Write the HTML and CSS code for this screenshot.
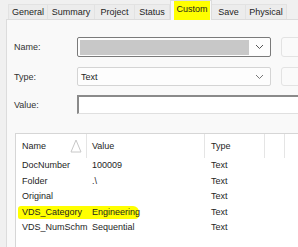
FILE: index.html
```html
<!DOCTYPE html>
<html lang="en">
<head>
    <meta charset="UTF-8">
    <title>Properties</title>
    <link rel="stylesheet" href="styles.css">
</head>
<body>

<!-- Tabs -->
<div class="tabs">
    <div class="tab t-general">General</div>
    <div class="tab t-summary">Summary</div>
    <div class="tab t-project">Project</div>
    <div class="tab t-status">Status</div>
    <div class="tab active t-custom"><span class="mark">Custom</span></div>
    <div class="tab t-save">Save</div>
    <div class="tab t-physical">Physical</div>
</div>

<!-- Custom page -->
<div class="panel">
    <div class="field-row">
        <label class="label">Name:</label>
        <div class="combo focused">
            <span class="redacted"></span>
            <svg class="chev" width="9" height="6" viewBox="0 0 9 6"><path d="M1 1 L4.5 4.5 L8 1" fill="none" stroke="#555" stroke-width="1"/></svg>
        </div>
        <div class="side-btn"></div>
    </div>
    <div class="field-row">
        <label class="label">Type:</label>
        <div class="combo short">
            <span class="combo-text">Text</span>
            <svg class="chev" width="9" height="6" viewBox="0 0 9 6"><path d="M1 1 L4.5 4.5 L8 1" fill="none" stroke="#777" stroke-width="1"/></svg>
        </div>
        <div class="side-btn short"></div>
    </div>
    <div class="field-row">
        <label class="label">Value:</label>
        <div class="value-box"></div>
    </div>

    <div class="list">
        <div class="list-head">
            <div class="col c-name">Name
                <svg class="sort" width="12" height="14" viewBox="0 0 12 14"><path d="M6 1 L11 13 L1 13 Z" fill="none" stroke="#c8c8c8" stroke-width="1"/></svg>
            </div>
            <div class="col c-value">Value</div>
            <div class="col c-type">Type</div>
            <div class="col c-x"></div>
            <div class="col c-y"></div>
        </div>
        <div class="list-row"><span class="c-name">DocNumber</span><span class="c-value">100009</span><span class="c-type">Text</span></div>
        <div class="list-row"><span class="c-name">Folder</span><span class="c-value">.\</span><span class="c-type">Text</span></div>
        <div class="list-row"><span class="c-name">Original</span><span class="c-value"></span><span class="c-type">Text</span></div>
        <div class="list-row marked"><span class="c-name">VDS_Category</span><span class="c-value">Engineering</span><span class="c-type">Text</span></div>
        <div class="list-row"><span class="c-name">VDS_NumSchm</span><span class="c-value">Sequential</span><span class="c-type">Text</span></div>
    </div>
</div>

</body>
</html>
```

FILE: styles.css
```css
body {
    margin: 0;
    width: 298px;
    height: 247px;
    overflow: hidden;
    background-color: #f0f0f0;
    font-family: "Liberation Sans", Arial, sans-serif;
    font-size: 9px;
    color: #1e1e1e;
}

/* tab strip */
.tabs {
    display: flex;
    align-items: flex-end;
    height: 19px;
    padding-left: 8px;
}
.tab {
    flex-shrink: 0;
    height: 15px;
    line-height: 14px;
    text-align: center;
    background-color: #ececec;
    border: 1px solid #e2e2e2;
    border-bottom: none;
    box-sizing: border-box;
}
.tab + .tab {
    border-left: none;
}
.t-general { width: 40px; }
.t-summary { width: 47px; }
.t-project { width: 40px; }
.t-status { width: 35px; }
.t-custom { width: 42px; }
.t-save { width: 34px; }
.t-physical { width: 41px; }

.tab.active {
    height: 20px;
    margin-bottom: -1px;
    padding: 0 1px 0 3px;
    background-color: #f9f9f9;
    border: 1px solid #dcdcdc;
    border-bottom: none;
    position: relative;
    z-index: 1;
}
.mark {
    display: block;
    height: 19px;
    line-height: 17px;
    background-color: #ffff00;
}

/* page */
.panel {
    margin-left: 6px;
    height: 228px;
    padding: 17px 0 0 7px;
    box-sizing: border-box;
    background-color: #f9f9f9;
    border-top: 1px solid #dcdcdc;
    border-left: 1px solid #dcdcdc;
}
.field-row {
    display: flex;
    align-items: center;
    margin-bottom: 10px;
}
.field-row:nth-child(2) {
    margin-bottom: 9px;
}
.label {
    flex-shrink: 0;
    width: 63px;
    color: #333;
}
.combo {
    flex-shrink: 0;
    width: 194px;
    height: 20px;
    box-sizing: border-box;
    display: flex;
    align-items: center;
    padding: 0 6px 0 2px;
    background-color: #fdfdfd;
    border: 1px solid #d4d4d4;
    border-radius: 2px;
}
.combo.focused {
    border-color: #7a7a7a;
}
.combo.short {
    height: 19px;
}
.redacted {
    flex: 1;
    height: 15px;
    margin-right: 6px;
    background-color: #c8c8c8;
}
.combo-text {
    flex: 1;
    padding-left: 1px;
}
.side-btn {
    flex-shrink: 0;
    width: 60px;
    height: 20px;
    margin-left: 10px;
    box-sizing: border-box;
    border: 1px solid #e3e3e3;
    border-radius: 3px;
    background-color: #fafafa;
}
.side-btn.short {
    height: 19px;
}
.value-box {
    flex-shrink: 0;
    width: 240px;
    height: 19px;
    box-sizing: border-box;
    background-color: #fff;
    border-top: 2px solid #8a8a8a;
    border-left: 2px solid #8a8a8a;
    border-bottom: 1px solid #e0e0e0;
}

/* list view */
.list {
    width: 300px;
    height: 120px;
    margin-top: 19px;
    margin-left: 1px;
    background-color: #fff;
    border: 1px solid #d6d6d6;
}
.list-head {
    display: flex;
    height: 24px;
    line-height: 24px;
}
.list-head .col {
    flex-shrink: 0;
    border-right: 1px solid #e5e5e5;
    box-sizing: border-box;
    position: relative;
}
.c-name {
    flex-shrink: 0;
    width: 71px;
    padding-left: 6px;
    box-sizing: border-box;
}
.c-value {
    flex-shrink: 0;
    width: 118px;
    padding-left: 5px;
    box-sizing: border-box;
}
.c-type {
    flex-shrink: 0;
    width: 60px;
    padding-left: 6px;
    box-sizing: border-box;
}
.c-x {
    width: 20px;
}
.c-y {
    width: 20px;
}
.sort {
    position: absolute;
    left: 54px;
    top: 5px;
}
.list-row {
    display: flex;
    height: 15.6px;
    line-height: 15.6px;
    position: relative;
}
.list-row span {
    position: relative;
}
.list-row.marked::before {
    content: "";
    position: absolute;
    left: 2px;
    top: 1px;
    width: 121px;
    height: 13px;
    background-color: #ffff00;
    border-radius: 3px 6px 4px 2px;
}
```
